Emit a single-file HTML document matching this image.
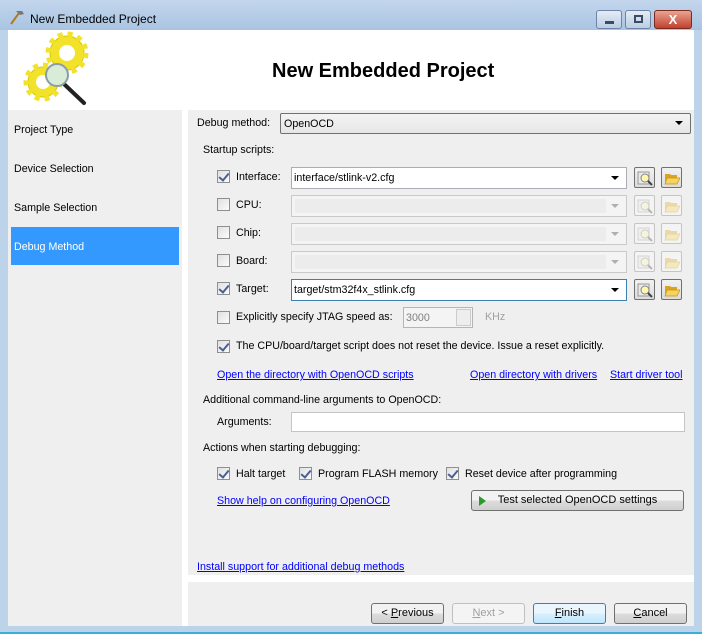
<!DOCTYPE html>
<html><head><meta charset="utf-8"><style>
*{margin:0;padding:0;box-sizing:border-box}
body{width:702px;height:634px;overflow:hidden;background:#bdd3ea;font-family:"Liberation Sans",sans-serif;font-size:10.7px;color:#000;position:relative}
.a{position:absolute;white-space:nowrap}
.t{position:absolute;white-space:nowrap;line-height:14px}
.lnk{color:#0000ff;text-decoration:underline}
.cb{position:absolute;width:13px;height:13px;border:1px solid #8e8f8f;background:linear-gradient(135deg,#e0e0e0,#fbfbfb)}
.cb.on::after{content:"";position:absolute;left:3px;top:0px;width:4px;height:8px;border:solid #4a5f97;border-width:0 2px 2px 0;transform:rotate(40deg)}
.combo{position:absolute;height:22px;border:1px solid #abadb3;background:#fff}
.combo.dis{background:#f4f4f4;border-color:#c9c9c9}
.combo.dis::before{content:"";position:absolute;left:3px;top:3px;right:20px;bottom:3px;background:#ececec}
.arr{position:absolute;right:7px;top:8px;width:0;height:0;border-left:4px solid transparent;border-right:4px solid transparent;border-top:4px solid #000}
.dis .arr{border-top-color:#b0b0b0}
.ib{position:absolute;width:21px;height:21px;border:1px solid #707070;border-radius:2px;background:linear-gradient(#f2f2f2,#dcdcdc)}
.ib.dis{border-color:#c5c5c5;background:#f4f4f4}
.ib svg{position:absolute;left:2px;top:2px}
.ib.dis svg{opacity:.35}
.btn{position:absolute;height:21px;border:1px solid #707070;border-radius:3px;background:linear-gradient(#f2f2f2 50%,#dddddd 50%,#cfcfcf);text-align:center;line-height:19px;font-size:11px}
</style></head><body>
<svg width="0" height="0" style="position:absolute"><defs>
<symbol id="mag" viewBox="0 0 16 16"><rect x="1" y="2" width="11" height="12" fill="#e8e8e8" stroke="#999"/><circle cx="8" cy="8" r="4" fill="#fff6b0" stroke="#888"/><path d="M11 11 L15 15" stroke="#444" stroke-width="2"/></symbol>
<symbol id="fold" viewBox="0 0 16 16"><path d="M1 4 H6 L7 5 H13 V14 H1 Z" fill="#d9a520"/><path d="M3 8 H16 L13 14 H1 Z" fill="#f6d35a" stroke="#c9931a" stroke-width=".7"/></symbol>
</defs></svg>
<!-- title bar -->
<div class="a" style="left:0;top:0;width:702px;height:30px;background:linear-gradient(#c3d6ec,#a9c4e2)"></div>
<svg class="a" style="left:8px;top:8px" width="18" height="18"><path d="M3 16 L11 5" stroke="#b07a20" stroke-width="2"/><path d="M8 3 L14 3 L16 6 L12 7 Z" fill="#777"/></svg>
<div class="t" style="left:30px;top:12px;font-size:12px">New Embedded Project</div>
<div class="a" style="left:596px;top:10px;width:26px;height:19px;border:1px solid #6d84a6;border-radius:3px;background:linear-gradient(#e3ecf6,#bccde3)"><div class="a" style="left:8px;top:10px;width:9px;height:3px;background:#3b4b63"></div></div>
<div class="a" style="left:625px;top:10px;width:26px;height:19px;border:1px solid #6d84a6;border-radius:3px;background:linear-gradient(#e3ecf6,#bccde3)"><div class="a" style="left:8px;top:4px;width:9px;height:8px;border:2px solid #3b4b63"></div></div>
<div class="a" style="left:654px;top:10px;width:38px;height:19px;border:1px solid #7a2a20;border-radius:3px;background:linear-gradient(#e9a593,#c2402c);color:#fff;font-weight:bold;font-size:13px;text-align:center;line-height:17px">X</div>
<!-- header -->
<div class="a" style="left:8px;top:30px;width:686px;height:80px;background:#fff"></div>
<svg class="a" style="left:18px;top:31px" width="80" height="76" viewBox="18 31 80 76">
<g fill="#f2e32a" stroke="#d8c600" stroke-width="1">
<circle cx="67" cy="53" r="17"/><circle cx="43" cy="82" r="15"/></g>
<g stroke="#f2e32a" stroke-width="5" stroke-dasharray="5 5">
<circle cx="67" cy="53" r="19" fill="none"/><circle cx="43" cy="82" r="17" fill="none"/></g>
<circle cx="67" cy="53" r="8" fill="#fff"/><circle cx="43" cy="82" r="7" fill="#fff"/>
<path d="M64 84 L84 103" stroke="#222" stroke-width="4" stroke-linecap="round"/>
<circle cx="57" cy="75" r="11" fill="#d8ecd8" stroke="#8a9ca8" stroke-width="2"/>
</svg>
<div class="t" style="left:272px;top:60px;font-size:20px;font-weight:bold;line-height:22px">New Embedded Project</div>
<!-- left panel -->
<div class="a" style="left:8px;top:110px;width:174px;height:516px;background:#efefef"></div>
<div class="a" style="left:182px;top:110px;width:6px;height:516px;background:#fff"></div>
<div class="t" style="left:14px;top:123px">Project Type</div>
<div class="t" style="left:14px;top:162px">Device Selection</div>
<div class="t" style="left:14px;top:201px">Sample Selection</div>
<div class="a" style="left:11px;top:227px;width:168px;height:38px;background:#3399ff"></div>
<div class="t" style="left:14px;top:240px;color:#fff">Debug Method</div>
<!-- right panel -->
<div class="a" style="left:188px;top:110px;width:506px;height:465px;background:#efefef"></div>
<div class="a" style="left:188px;top:575px;width:506px;height:7px;background:#fff"></div>
<div class="a" style="left:188px;top:582px;width:506px;height:44px;background:#efefef"></div>
<div class="a" style="left:0;top:626px;width:702px;height:8px;background:#bdd3ea;border-bottom:2px solid #3ab0d8"></div>

<div class="t" style="left:197px;top:116px">Debug method:</div>
<div class="combo" style="left:280px;top:113px;width:411px;height:21px;border-color:#707070;border-radius:2px;background:linear-gradient(#f4f4f4,#e6e6e6)"><div class="t" style="left:3px;top:3px">OpenOCD</div><div class="arr" style="top:7px"></div></div>
<div class="t" style="left:203px;top:143px">Startup scripts:</div>

<div class="cb on" style="left:217px;top:170px"></div><div class="t" style="left:236px;top:170px">Interface:</div>
<div class="combo" style="left:291px;top:167px;width:336px"><div class="t" style="left:2px;top:3px">interface/stlink-v2.cfg</div><div class="arr"></div></div>
<div class="ib" style="left:634px;top:167px"><svg width="16" height="16"><use href="#mag"/></svg></div><div class="ib" style="left:661px;top:167px"><svg width="16" height="16"><use href="#fold"/></svg></div>

<div class="cb" style="left:217px;top:198px"></div><div class="t" style="left:236px;top:198px">CPU:</div>
<div class="combo dis" style="left:291px;top:195px;width:336px"><div class="arr"></div></div>
<div class="ib dis" style="left:634px;top:195px"><svg width="16" height="16"><use href="#mag"/></svg></div><div class="ib dis" style="left:661px;top:195px"><svg width="16" height="16"><use href="#fold"/></svg></div>

<div class="cb" style="left:217px;top:226px"></div><div class="t" style="left:236px;top:226px">Chip:</div>
<div class="combo dis" style="left:291px;top:223px;width:336px"><div class="arr"></div></div>
<div class="ib dis" style="left:634px;top:223px"><svg width="16" height="16"><use href="#mag"/></svg></div><div class="ib dis" style="left:661px;top:223px"><svg width="16" height="16"><use href="#fold"/></svg></div>

<div class="cb" style="left:217px;top:254px"></div><div class="t" style="left:236px;top:254px">Board:</div>
<div class="combo dis" style="left:291px;top:251px;width:336px"><div class="arr"></div></div>
<div class="ib dis" style="left:634px;top:251px"><svg width="16" height="16"><use href="#mag"/></svg></div><div class="ib dis" style="left:661px;top:251px"><svg width="16" height="16"><use href="#fold"/></svg></div>

<div class="cb on" style="left:217px;top:282px"></div><div class="t" style="left:236px;top:282px">Target:</div>
<div class="combo" style="left:291px;top:279px;width:336px;border-color:#3c7fb1"><div class="t" style="left:2px;top:3px">target/stm32f4x_stlink.cfg</div><div class="arr"></div></div>
<div class="ib" style="left:634px;top:279px"><svg width="16" height="16"><use href="#mag"/></svg></div><div class="ib" style="left:661px;top:279px"><svg width="16" height="16"><use href="#fold"/></svg></div>

<div class="cb" style="left:217px;top:311px"></div><div class="t" style="left:236px;top:310px">Explicitly specify JTAG speed as:</div>
<div class="a" style="left:403px;top:307px;width:70px;height:21px;border:1px solid #b5b5b5;background:#f4f4f4"><div class="t" style="left:2px;top:3px;color:#808080">3000</div><div class="a" style="left:52px;top:1px;width:15px;height:17px;border:1px solid #ccc;background:#eee"></div></div>
<div class="t" style="left:485px;top:310px;color:#a0a0a0">KHz</div>

<div class="cb on" style="left:217px;top:340px"></div><div class="t" style="left:236px;top:339px">The CPU/board/target script does not reset the device. Issue a reset explicitly.</div>

<div class="t lnk" style="left:217px;top:368px">Open the directory with OpenOCD scripts</div>
<div class="t lnk" style="left:470px;top:368px">Open directory with drivers</div>
<div class="t lnk" style="left:610px;top:368px">Start driver tool</div>

<div class="t" style="left:203px;top:393px">Additional command-line arguments to OpenOCD:</div>
<div class="t" style="left:217px;top:415px">Arguments:</div>
<div class="a" style="left:291px;top:412px;width:394px;height:20px;border:1px solid #c5c5c5;background:#fff"></div>

<div class="t" style="left:203px;top:441px">Actions when starting debugging:</div>
<div class="cb on" style="left:217px;top:467px"></div><div class="t" style="left:236px;top:467px">Halt target</div>
<div class="cb on" style="left:299px;top:467px"></div><div class="t" style="left:318px;top:467px">Program FLASH memory</div>
<div class="cb on" style="left:446px;top:467px"></div><div class="t" style="left:465px;top:467px">Reset device after programming</div>

<div class="t lnk" style="left:217px;top:494px">Show help on configuring OpenOCD</div>
<div class="btn" style="left:471px;top:490px;width:213px"><svg class="a" style="left:7px;top:5px" width="8" height="10"><path d="M0 0 L7 5 L0 10 Z" fill="#2a9a2a"/></svg>Test selected OpenOCD settings</div>

<div class="t lnk" style="left:197px;top:560px">Install support for additional debug methods</div>

<div class="btn" style="left:371px;top:603px;width:73px"><span>&lt; <u>P</u>revious</span></div>
<div class="btn" style="left:452px;top:603px;width:73px;border-color:#c0c0c0;background:#f4f4f4;color:#a0a0a0"><u>N</u>ext &gt;</div>
<div class="btn" style="left:533px;top:603px;width:73px;border-color:#3c7fb1;background:linear-gradient(#eaf6fd 50%,#d9f0fc 50%,#bee6fd)"><u>F</u>inish</div>
<div class="btn" style="left:614px;top:603px;width:73px"><u>C</u>ancel</div>
</body></html>
